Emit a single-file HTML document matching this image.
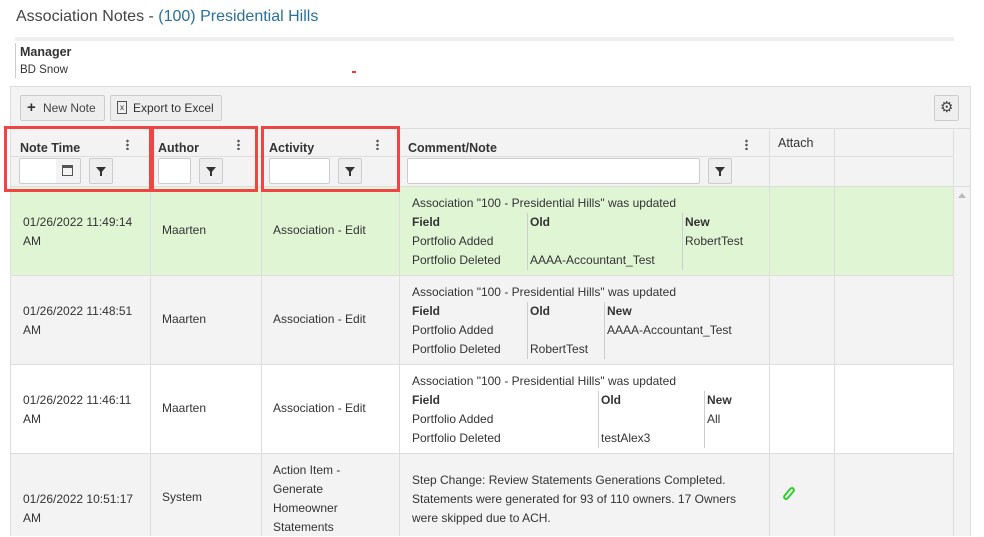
<!DOCTYPE html>
<html><head><meta charset="utf-8"><style>
*{box-sizing:border-box;margin:0;padding:0}
body{width:984px;height:536px;overflow:hidden;background:#fff;font-family:"Liberation Sans",sans-serif;font-size:12px;color:#333;position:relative}
.a{position:absolute;white-space:nowrap}
.v{position:absolute;width:1px;background:#ddd}
.h{position:absolute;height:1px;background:#ddd}
.btn{position:absolute;border:1px solid #ccc;background:#eee;border-radius:2px}
.inp{position:absolute;border:1px solid #ccc;background:#fff;border-radius:2px;height:26px}
.fb{position:absolute;width:24px;height:26px;border:1px solid #ccc;background:#eee;border-radius:2px}
.fb:after{content:"";position:absolute;left:6px;top:8px;border-left:5px solid transparent;border-right:5px solid transparent;border-top:6px solid #333}
.fb:before{content:"";position:absolute;left:10px;top:12px;width:2px;height:5px;background:#333}
.dots{position:absolute;width:3px;height:11px;background:radial-gradient(circle,#555 1.2px,transparent 1.4px) 0 0/3px 4px repeat-y}
.red{position:absolute;border:3px solid #f04545}
.row{position:absolute;left:11px;width:942px;height:89px}
.b{font-weight:bold}
</style></head><body>
<div class="a" style="left:16px;top:8px;font-size:16px;color:#444">Association Notes - <span style="color:#2a6f9a">(100) Presidential Hills</span></div>
<div class="a" style="left:15px;top:37px;width:939px;height:4px;background:#eee"></div>
<div class="a" style="left:15px;top:43px;width:1px;height:35px;background:#ccc"></div>
<div class="a b" style="left:20px;top:45px;font-size:12.5px;color:#333">Manager</div>
<div class="a" style="left:20px;top:64px;font-size:11.5px">BD Snow</div>
<div class="a" style="left:352px;top:71px;width:4px;height:2px;background:#f33"></div>
<div class="a" style="left:340px;top:97px;width:4px;height:2px;background:#f33"></div>
<!-- grid -->
<div class="a" style="left:10px;top:86px;width:961px;height:450px;background:#f3f3f3;border:1px solid #ddd"></div>
<div class="btn" style="left:20px;top:95px;width:85px;height:26px"><span class="a" style="left:6px;top:3px;font-size:15px;font-weight:bold">+</span><span class="a" style="left:22px;top:5px;color:#444">New Note</span></div>
<div class="btn" style="left:110px;top:95px;width:112px;height:26px"><span class="a" style="left:6px;top:5px;width:10px;height:13px;border:1px solid #555;font-size:8px;text-align:center;line-height:11px">x</span><span class="a" style="left:22px;top:5px;color:#333">Export to Excel</span></div>
<div class="btn" style="left:934px;top:95px;width:25px;height:26px"><span class="a" style="left:5px;top:2px;font-size:15px;color:#444">⚙</span></div>
<div class="h" style="left:11px;top:128px;width:959px"></div>
<div class="h" style="left:11px;top:156px;width:942px"></div>
<div class="h" style="left:11px;top:186px;width:959px"></div>
<!-- header texts -->
<div class="a b" style="left:20px;top:141px;font-size:12.5px">Note Time</div>
<div class="a b" style="left:158px;top:141px;font-size:12.5px">Author</div>
<div class="a b" style="left:269px;top:141px;font-size:12.5px">Activity</div>
<div class="a b" style="left:408px;top:141px;font-size:12.5px">Comment/Note</div>
<div class="a" style="left:778px;top:136px;font-size:12.5px">Attach</div>
<div class="dots" style="left:126px;top:139px"></div>
<div class="dots" style="left:237px;top:139px"></div>
<div class="dots" style="left:376px;top:139px"></div>
<div class="dots" style="left:745px;top:139px"></div>
<div class="inp" style="left:19px;top:158px;width:62px;background:linear-gradient(90deg,#fff 36px,#f3f3f3 36px)"><span class="a" style="left:42px;top:6px;width:11px;height:11px;border:1px solid #555;border-top-width:3px"></span></div>
<div class="fb" style="left:89px;top:158px"></div>
<div class="inp" style="left:158px;top:158px;width:33px"></div>
<div class="fb" style="left:199px;top:158px"></div>
<div class="inp" style="left:269px;top:158px;width:61px"></div>
<div class="fb" style="left:338px;top:158px"></div>
<div class="inp" style="left:407px;top:158px;width:293px"></div>
<div class="fb" style="left:708px;top:158px"></div>
<!-- rows -->
<div class="row" style="top:187px;background:#dff5d4"></div>
<div class="row" style="top:276px;background:#f3f3f3"></div>
<div class="row" style="top:365px;background:#fff"></div>
<div class="row" style="top:454px;background:#f3f3f3;height:82px"></div>
<div class="h" style="left:11px;top:275px;width:942px"></div>
<div class="h" style="left:11px;top:364px;width:942px"></div>
<div class="h" style="left:11px;top:453px;width:942px"></div>
<div class="v" style="left:150px;top:128px;height:408px"></div>
<div class="v" style="left:261px;top:128px;height:408px"></div>
<div class="v" style="left:399px;top:128px;height:408px"></div>
<div class="v" style="left:769px;top:128px;height:408px"></div>
<div class="v" style="left:834px;top:128px;height:408px"></div>
<div class="v" style="left:953px;top:128px;height:408px"></div>
<div class="a" style="left:954px;top:187px;width:16px;height:349px;background:#f3f3f3"></div>
<div class="a" style="left:958px;top:193px;border-left:4px solid transparent;border-right:4px solid transparent;border-bottom:5px solid #bbb"></div>
<!-- row1 -->
<div class="a" style="left:23px;top:213px;line-height:19px">01/26/2022 11:49:14<br>AM</div>
<div class="a" style="left:162px;top:223px">Maarten</div>
<div class="a" style="left:273px;top:223px">Association - Edit</div>
<div class="a" style="left:412px;top:194px;line-height:19px">Association "100 - Presidential Hills" was updated</div>
<div class="a" style="left:412px;top:213px;line-height:19px"><b>Field</b><br>Portfolio Added<br>Portfolio Deleted</div>
<div class="v" style="left:527px;top:213px;height:57px;background:#ccc"></div>
<div class="a" style="left:530px;top:213px;line-height:19px"><b>Old</b><br><br>AAAA-Accountant_Test</div>
<div class="v" style="left:682px;top:213px;height:57px;background:#ccc"></div>
<div class="a" style="left:685px;top:213px;line-height:19px"><b>New</b><br>RobertTest</div>
<!-- row2 -->
<div class="a" style="left:23px;top:302px;line-height:19px">01/26/2022 11:48:51<br>AM</div>
<div class="a" style="left:162px;top:312px">Maarten</div>
<div class="a" style="left:273px;top:312px">Association - Edit</div>
<div class="a" style="left:412px;top:283px;line-height:19px">Association "100 - Presidential Hills" was updated</div>
<div class="a" style="left:412px;top:302px;line-height:19px"><b>Field</b><br>Portfolio Added<br>Portfolio Deleted</div>
<div class="v" style="left:527px;top:302px;height:57px;background:#ccc"></div>
<div class="a" style="left:530px;top:302px;line-height:19px"><b>Old</b><br><br>RobertTest</div>
<div class="v" style="left:604px;top:302px;height:57px;background:#ccc"></div>
<div class="a" style="left:607px;top:302px;line-height:19px"><b>New</b><br>AAAA-Accountant_Test</div>
<!-- row3 -->
<div class="a" style="left:23px;top:391px;line-height:19px">01/26/2022 11:46:11<br>AM</div>
<div class="a" style="left:162px;top:401px">Maarten</div>
<div class="a" style="left:273px;top:401px">Association - Edit</div>
<div class="a" style="left:412px;top:372px;line-height:19px">Association "100 - Presidential Hills" was updated</div>
<div class="a" style="left:412px;top:391px;line-height:19px"><b>Field</b><br>Portfolio Added<br>Portfolio Deleted</div>
<div class="v" style="left:598px;top:391px;height:57px;background:#ccc"></div>
<div class="a" style="left:601px;top:391px;line-height:19px"><b>Old</b><br><br>testAlex3</div>
<div class="v" style="left:704px;top:391px;height:57px;background:#ccc"></div>
<div class="a" style="left:707px;top:391px;line-height:19px"><b>New</b><br>All</div>
<!-- row4 -->
<div class="a" style="left:23px;top:490px;line-height:19px">01/26/2022 10:51:17<br>AM</div>
<div class="a" style="left:162px;top:490px">System</div>
<div class="a" style="left:273px;top:461px;line-height:19px">Action Item -<br>Generate<br>Homeowner<br>Statements</div>
<div class="a" style="left:412px;top:471px;line-height:19px">Step Change: Review Statements Generations Completed.<br>Statements were generated for 93 of 110 owners. 17 Owners<br>were skipped due to ACH.</div>
<div class="a" style="left:786px;top:486px;width:6px;height:15px;border:2px solid #3c3;border-radius:3px;transform:rotate(40deg)"></div>
<!-- red boxes -->
<div class="red" style="left:4px;top:126px;width:148px;height:66px"></div>
<div class="red" style="left:151px;top:126px;width:107px;height:66px"></div>
<div class="red" style="left:261px;top:126px;width:139px;height:66px"></div>
</body></html>
